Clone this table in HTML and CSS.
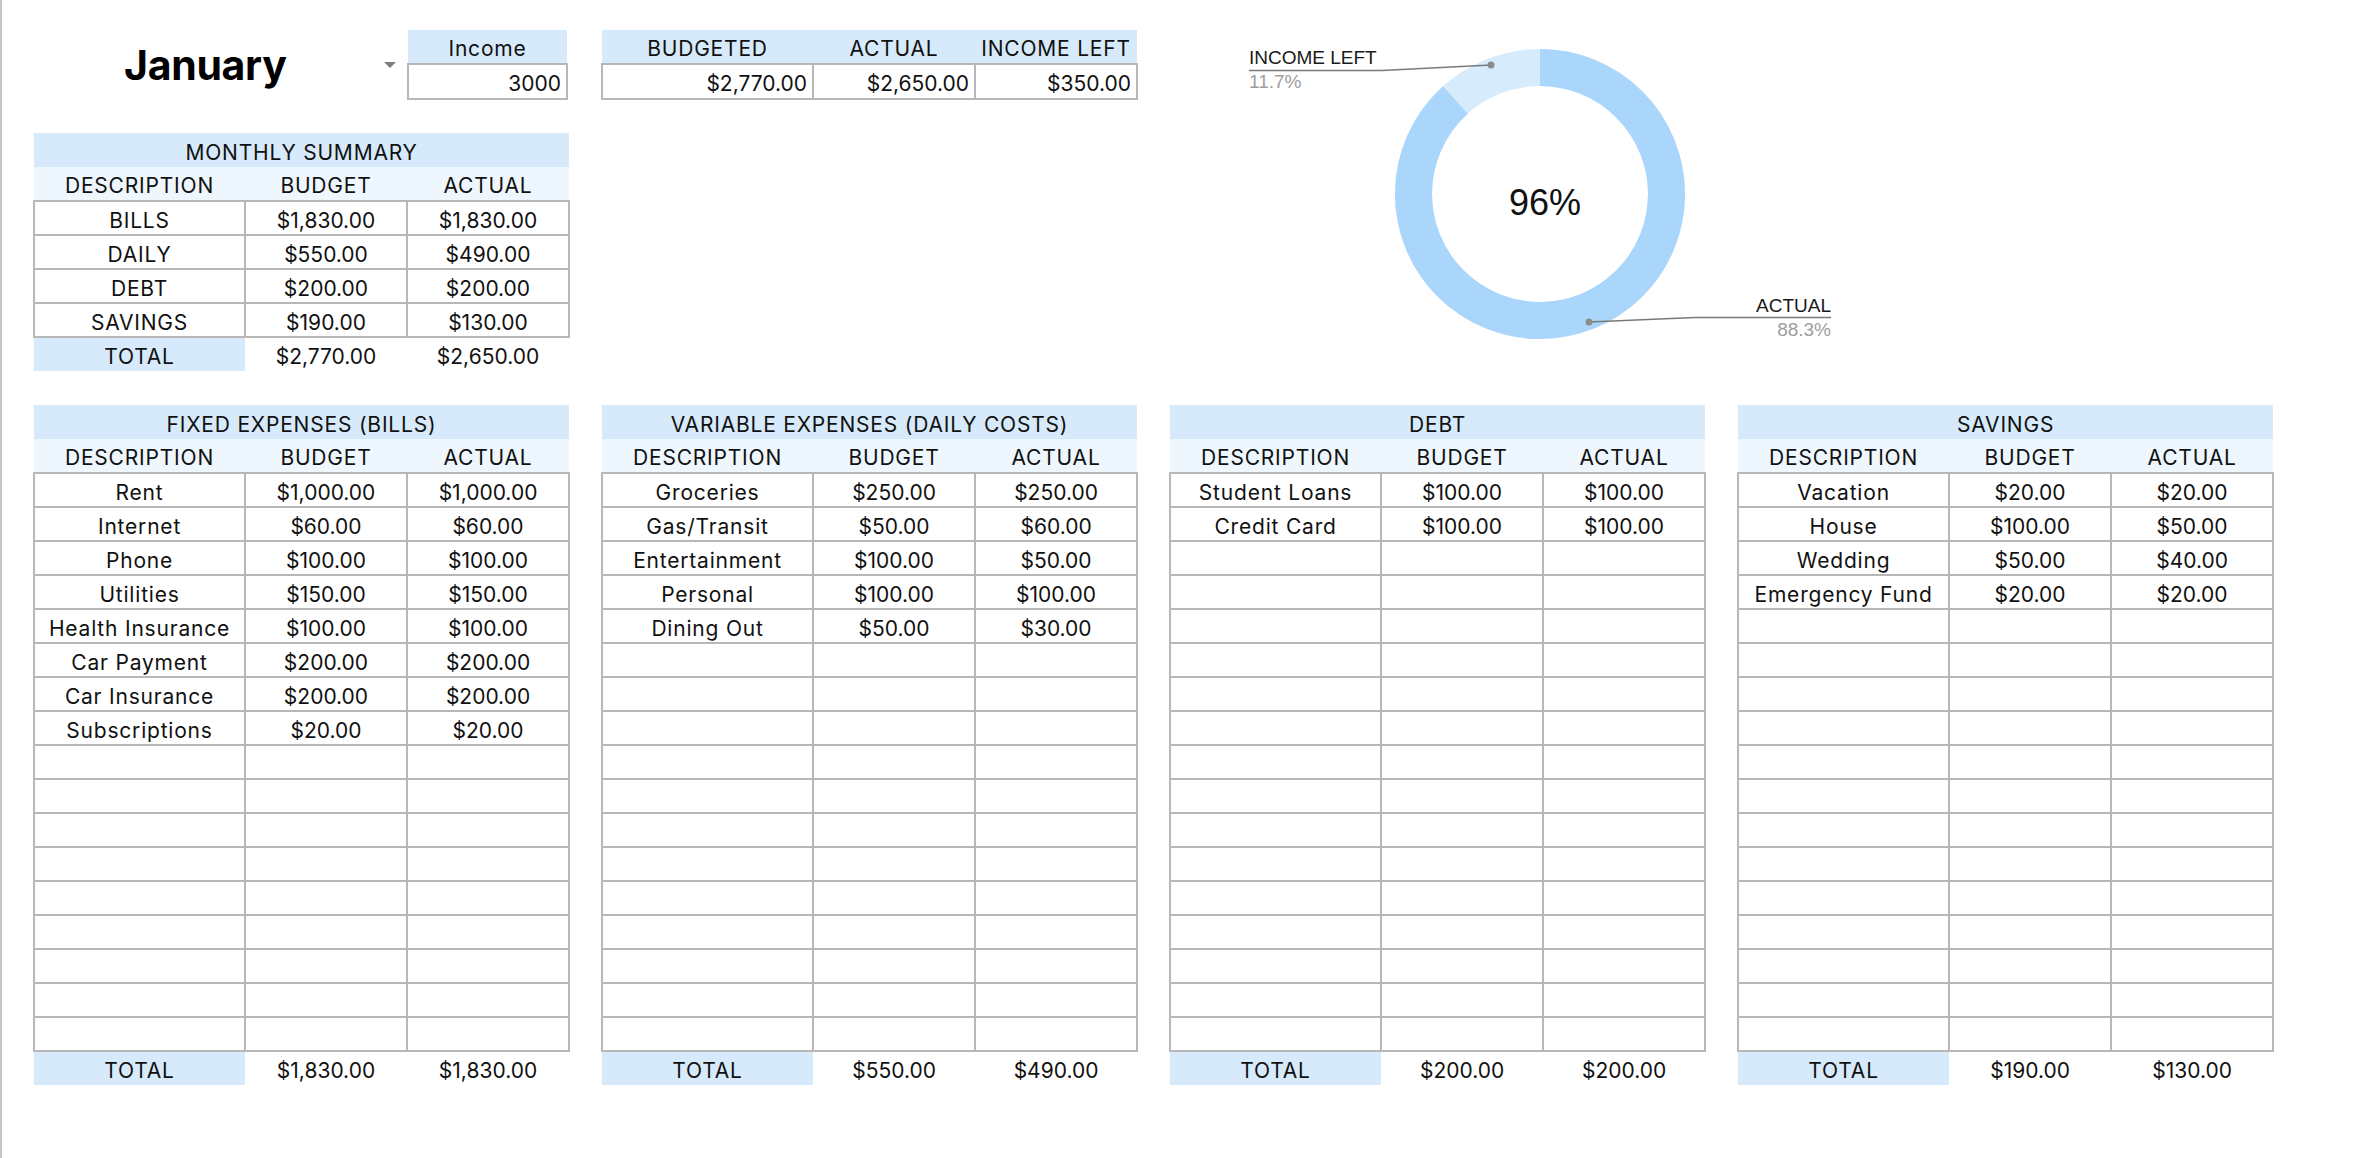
FILE: index.html
```html
<!DOCTYPE html>
<html lang="en">
<head>
<meta charset="utf-8">
<title>January Budget</title>
<link rel="stylesheet" href="styles.css">
</head>
<body>
<div class="sheet">
  <section class="top">
    <div class="top-left">
      <div class="title-row">
        <div class="month"><span class="month-name">January</span><span class="caret"></span></div>
        <table class="grid income">
          <thead><tr class="title"><th>Income</th></tr></thead>
          <tbody><tr><td class="num">3000</td></tr></tbody>
        </table>
      </div>
      <table class="grid">
        <colgroup><col class="c1"><col class="c2"><col class="c3"></colgroup>
        <thead>
          <tr class="title"><th colspan="3">MONTHLY SUMMARY</th></tr>
          <tr class="cols"><th>DESCRIPTION</th><th>BUDGET</th><th>ACTUAL</th></tr>
        </thead>
        <tbody>
          <tr><td>BILLS</td><td>$1,830.00</td><td>$1,830.00</td></tr>
          <tr><td>DAILY</td><td>$550.00</td><td>$490.00</td></tr>
          <tr><td>DEBT</td><td>$200.00</td><td>$200.00</td></tr>
          <tr><td>SAVINGS</td><td>$190.00</td><td>$130.00</td></tr>
        </tbody>
        <tfoot><tr><td>TOTAL</td><td>$2,770.00</td><td>$2,650.00</td></tr></tfoot>
      </table>
    </div>
    <table class="grid totals">
      <colgroup><col class="c1"><col class="c2"><col class="c3"></colgroup>
      <thead><tr class="title"><th>BUDGETED</th><th>ACTUAL</th><th>INCOME LEFT</th></tr></thead>
      <tbody><tr><td class="num">$2,770.00</td><td class="num">$2,650.00</td><td class="num">$350.00</td></tr></tbody>
    </table>
    <svg class="chart" width="764" height="370" viewBox="1136 0 764 370" xmlns="http://www.w3.org/2000/svg">
      <circle cx="1538" cy="194" r="126.5" fill="none" stroke="#d6ebfc" stroke-width="37"/>
      <circle cx="1538" cy="194" r="126.5" fill="none" stroke="#a9d6fa" stroke-width="37" stroke-dasharray="701.8 1000" transform="rotate(-90 1538 194)"/>
      <text class="center-label" x="1543" y="215" text-anchor="middle">96%</text>
      <polyline points="1247,70.5 1380,70.5 1489,65" fill="none" stroke="#7a7a7a" stroke-width="1.6"/>
      <circle cx="1489" cy="65" r="3.5" fill="#8c8c8c"/>
      <text class="lbl" x="1247" y="64">INCOME LEFT</text>
      <text class="pct" x="1247" y="88">11.7%</text>
      <polyline points="1829,317.5 1693,317.5 1587,322" fill="none" stroke="#7a7a7a" stroke-width="1.6"/>
      <circle cx="1587" cy="322" r="3.5" fill="#8c8c8c"/>
      <text class="lbl" x="1829" y="312" text-anchor="end">ACTUAL</text>
      <text class="pct" x="1829" y="336" text-anchor="end">88.3%</text>
    </svg>
  </section>

  <section class="bottom">
    <table class="grid">
      <colgroup><col class="c1"><col class="c2"><col class="c3"></colgroup>
      <thead>
        <tr class="title"><th colspan="3">FIXED EXPENSES (BILLS)</th></tr>
        <tr class="cols"><th>DESCRIPTION</th><th>BUDGET</th><th>ACTUAL</th></tr>
      </thead>
      <tbody>
        <tr><td>Rent</td><td>$1,000.00</td><td>$1,000.00</td></tr>
        <tr><td>Internet</td><td>$60.00</td><td>$60.00</td></tr>
        <tr><td>Phone</td><td>$100.00</td><td>$100.00</td></tr>
        <tr><td>Utilities</td><td>$150.00</td><td>$150.00</td></tr>
        <tr><td>Health Insurance</td><td>$100.00</td><td>$100.00</td></tr>
        <tr><td>Car Payment</td><td>$200.00</td><td>$200.00</td></tr>
        <tr><td>Car Insurance</td><td>$200.00</td><td>$200.00</td></tr>
        <tr><td>Subscriptions</td><td>$20.00</td><td>$20.00</td></tr>
        <tr><td></td><td></td><td></td></tr>
        <tr><td></td><td></td><td></td></tr>
        <tr><td></td><td></td><td></td></tr>
        <tr><td></td><td></td><td></td></tr>
        <tr><td></td><td></td><td></td></tr>
        <tr><td></td><td></td><td></td></tr>
        <tr><td></td><td></td><td></td></tr>
        <tr><td></td><td></td><td></td></tr>
        <tr><td></td><td></td><td></td></tr>
      </tbody>
      <tfoot><tr><td>TOTAL</td><td>$1,830.00</td><td>$1,830.00</td></tr></tfoot>
    </table>

    <table class="grid">
      <colgroup><col class="c1"><col class="c2"><col class="c3"></colgroup>
      <thead>
        <tr class="title"><th colspan="3">VARIABLE EXPENSES (DAILY COSTS)</th></tr>
        <tr class="cols"><th>DESCRIPTION</th><th>BUDGET</th><th>ACTUAL</th></tr>
      </thead>
      <tbody>
        <tr><td>Groceries</td><td>$250.00</td><td>$250.00</td></tr>
        <tr><td>Gas/Transit</td><td>$50.00</td><td>$60.00</td></tr>
        <tr><td>Entertainment</td><td>$100.00</td><td>$50.00</td></tr>
        <tr><td>Personal</td><td>$100.00</td><td>$100.00</td></tr>
        <tr><td>Dining Out</td><td>$50.00</td><td>$30.00</td></tr>
        <tr><td></td><td></td><td></td></tr>
        <tr><td></td><td></td><td></td></tr>
        <tr><td></td><td></td><td></td></tr>
        <tr><td></td><td></td><td></td></tr>
        <tr><td></td><td></td><td></td></tr>
        <tr><td></td><td></td><td></td></tr>
        <tr><td></td><td></td><td></td></tr>
        <tr><td></td><td></td><td></td></tr>
        <tr><td></td><td></td><td></td></tr>
        <tr><td></td><td></td><td></td></tr>
        <tr><td></td><td></td><td></td></tr>
        <tr><td></td><td></td><td></td></tr>
      </tbody>
      <tfoot><tr><td>TOTAL</td><td>$550.00</td><td>$490.00</td></tr></tfoot>
    </table>

    <table class="grid">
      <colgroup><col class="c1"><col class="c2"><col class="c3"></colgroup>
      <thead>
        <tr class="title"><th colspan="3">DEBT</th></tr>
        <tr class="cols"><th>DESCRIPTION</th><th>BUDGET</th><th>ACTUAL</th></tr>
      </thead>
      <tbody>
        <tr><td>Student Loans</td><td>$100.00</td><td>$100.00</td></tr>
        <tr><td>Credit Card</td><td>$100.00</td><td>$100.00</td></tr>
        <tr><td></td><td></td><td></td></tr>
        <tr><td></td><td></td><td></td></tr>
        <tr><td></td><td></td><td></td></tr>
        <tr><td></td><td></td><td></td></tr>
        <tr><td></td><td></td><td></td></tr>
        <tr><td></td><td></td><td></td></tr>
        <tr><td></td><td></td><td></td></tr>
        <tr><td></td><td></td><td></td></tr>
        <tr><td></td><td></td><td></td></tr>
        <tr><td></td><td></td><td></td></tr>
        <tr><td></td><td></td><td></td></tr>
        <tr><td></td><td></td><td></td></tr>
        <tr><td></td><td></td><td></td></tr>
        <tr><td></td><td></td><td></td></tr>
        <tr><td></td><td></td><td></td></tr>
      </tbody>
      <tfoot><tr><td>TOTAL</td><td>$200.00</td><td>$200.00</td></tr></tfoot>
    </table>

    <table class="grid">
      <colgroup><col class="c1"><col class="c2"><col class="c3"></colgroup>
      <thead>
        <tr class="title"><th colspan="3">SAVINGS</th></tr>
        <tr class="cols"><th>DESCRIPTION</th><th>BUDGET</th><th>ACTUAL</th></tr>
      </thead>
      <tbody>
        <tr><td>Vacation</td><td>$20.00</td><td>$20.00</td></tr>
        <tr><td>House</td><td>$100.00</td><td>$50.00</td></tr>
        <tr><td>Wedding</td><td>$50.00</td><td>$40.00</td></tr>
        <tr><td>Emergency Fund</td><td>$20.00</td><td>$20.00</td></tr>
        <tr><td></td><td></td><td></td></tr>
        <tr><td></td><td></td><td></td></tr>
        <tr><td></td><td></td><td></td></tr>
        <tr><td></td><td></td><td></td></tr>
        <tr><td></td><td></td><td></td></tr>
        <tr><td></td><td></td><td></td></tr>
        <tr><td></td><td></td><td></td></tr>
        <tr><td></td><td></td><td></td></tr>
        <tr><td></td><td></td><td></td></tr>
        <tr><td></td><td></td><td></td></tr>
        <tr><td></td><td></td><td></td></tr>
        <tr><td></td><td></td><td></td></tr>
        <tr><td></td><td></td><td></td></tr>
      </tbody>
      <tfoot><tr><td>TOTAL</td><td>$190.00</td><td>$130.00</td></tr></tfoot>
    </table>
  </section>
</div>
</body>
</html>
```

FILE: styles.css
```css
* { box-sizing: border-box; }
html, body { margin: 0; padding: 0; background: #ffffff; }
body {
  font-family: Inter, "Noto Sans", sans-serif;
  color: #111111;
}
.sheet {
  min-height: 1158px;
  border-left: 2px solid #c6c6c6;
  padding-left: 31px;
  display: flex;
  flex-direction: column;
  gap: 34px;
}
.top {
  display: flex;
  align-items: flex-start;
}
.top-left {
  width: 535px;
  padding-top: 30px;
  display: flex;
  flex-direction: column;
  gap: 34px;
}
.title-row {
  display: flex;
  height: 69px;
}
.month {
  width: 374px;
  display: flex;
  align-items: center;
  padding-left: 91px;
}
.month-name {
  font-size: 41px;
  font-weight: 700;
  color: #000;
  letter-spacing: -0.3px;
}
.caret {
  margin-left: auto;
  margin-right: 11px;
  width: 0;
  height: 0;
  border-left: 6px solid transparent;
  border-right: 6px solid transparent;
  border-top: 6px solid #7d7d7d;
}
.grid {
  border-collapse: collapse;
  table-layout: fixed;
  width: 535px;
  font-size: 21px;
}
.grid col.c1 { width: 211px; }
.grid col.c2 { width: 162px; }
.grid col.c3 { width: 162px; }
.grid th, .grid td {
  height: 34px;
  padding: 4px 4px 0;
  text-align: center;
  font-weight: 400;
  white-space: nowrap;
  overflow: hidden;
  vertical-align: middle;
}
.grid th,
.grid td:first-child {
  letter-spacing: 0.8px;
}
.grid td.num { letter-spacing: 0; }
.grid .title th { background: #d6eafb; }
.grid .cols th { background: #eef6fe; }
.grid tbody td { border: 2px solid #b7b7b7; }
.grid tfoot td { border: none; }
.grid tfoot td:first-child { background: #d6eafb; }
.grid td.num { text-align: right; padding-right: 5px; }
.income { width: 161px; }
.income tbody td { height: 35px; }
.totals { margin: 30px 0 0 33px; }
.totals tbody td { height: 35px; }
.chart { display: block; flex: none; }
.chart text { font-family: "Liberation Sans", Arial, sans-serif; }
.chart .center-label { font-size: 36px; fill: #111; }
.chart .lbl { font-size: 19px; fill: #1a1a1a; }
.chart .pct { font-size: 19px; fill: #9e9e9e; }
.bottom {
  display: flex;
  gap: 31px;
}
```
